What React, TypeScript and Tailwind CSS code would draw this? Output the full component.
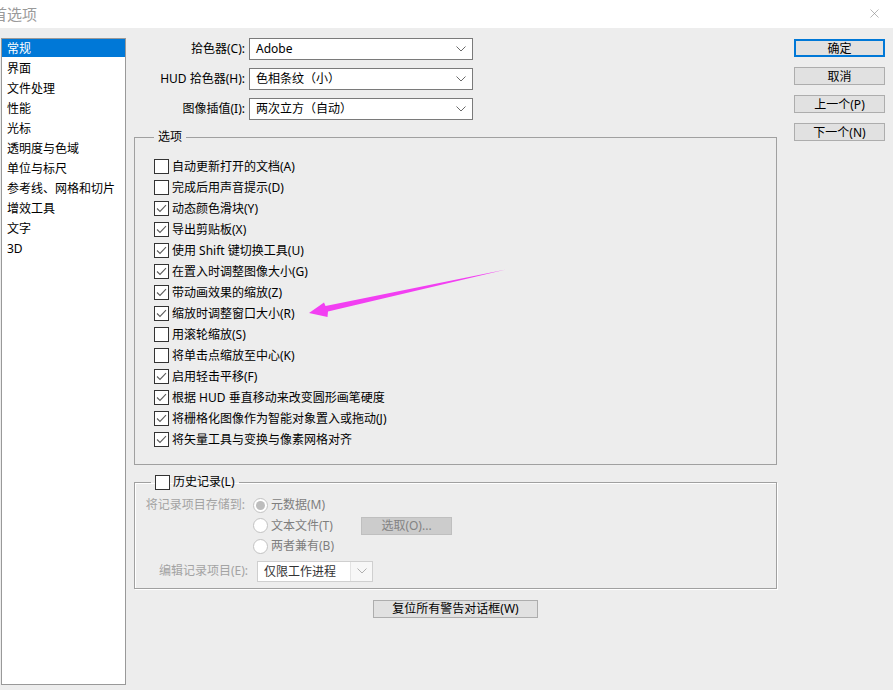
import { X } from 'lucide-react';

const font = "font-['Noto_Sans','Noto_Sans_CJK_SC',sans-serif]";

const navItems = ['常规', '界面', '文件处理', '性能', '光标', '透明度与色域', '单位与标尺', '参考线、网格和切片', '增效工具', '文字', '3D'];

const options: [string, boolean][] = [
  ['自动更新打开的文档(A)', false],
  ['完成后用声音提示(D)', false],
  ['动态颜色滑块(Y)', true],
  ['导出剪贴板(X)', true],
  ['使用 Shift 键切换工具(U)', true],
  ['在置入时调整图像大小(G)', true],
  ['带动画效果的缩放(Z)', true],
  ['缩放时调整窗口大小(R)', true],
  ['用滚轮缩放(S)', false],
  ['将单击点缩放至中心(K)', false],
  ['启用轻击平移(F)', true],
  ['根据 HUD 垂直移动来改变圆形画笔硬度', true],
  ['将栅格化图像作为智能对象置入或拖动(J)', true],
  ['将矢量工具与变换与像素网格对齐', true],
];

const Chevron = ({ color = '#6b6b6b' }: { color?: string }) => (
  <svg width="10" height="6" viewBox="0 0 10 6">
    <path d="M0.5 0.5 L5 5 L9.5 0.5" fill="none" stroke={color} strokeWidth="1" />
  </svg>
);

const CheckBox = ({ checked }: { checked?: boolean }) => (
  <span className="w-[15px] h-[15px] border border-[#333] bg-white flex items-center justify-center shrink-0">
    {checked && (
      <svg width="11" height="9" viewBox="0 0 11 9">
        <path d="M1 4.5 L4 7.5 L10 1.2" fill="none" stroke="#5c5c5c" strokeWidth="1.1" />
      </svg>
    )}
  </span>
);

const Radio = ({ selected }: { selected?: boolean }) => (
  <span className="w-[15px] h-[15px] rounded-full border border-[#c2c2c2] bg-white flex items-center justify-center shrink-0">
    {selected && <span className="w-[9px] h-[9px] rounded-full bg-[#bdbdbd]" />}
  </span>
);

function Select({ label, value }: { label: string; value: string }) {
  return (
    <div className="flex items-center h-[22px]">
      <span className="w-[111px] text-right text-black">{label}</span>
      <div className="ml-[4px] w-[224px] h-[22px] border border-[#7a7a7a] bg-white flex items-center justify-between pl-[6px] pr-[6px]">
        <span className="text-black">{value}</span>
        <Chevron />
      </div>
    </div>
  );
}

export default function App() {
  return (
    <div className={`${font} relative w-[893px] h-[690px] bg-[#ededed] overflow-hidden text-[12px] leading-[16px]`}>
      {/* title bar */}
      <div className="h-[28px] bg-white flex items-center justify-between">
        <span className="-ml-[8px] text-[15px] text-[#9a9a9a]">首选项</span>
        <X className="w-[15px] h-[15px] mr-[11px] -mt-[2px] text-[#8a8a8a]" strokeWidth={1} />
      </div>

      <div className="flex items-start">
        {/* category list */}
        <div className="ml-[1px] mt-[10px] w-[125px] h-[647px] border border-[#999] bg-white">
          {navItems.map((item, i) => (
            <div
              key={item}
              className={`h-[18px] leading-[19px] mb-[2px] pl-[5px] ${i === 0 ? 'bg-[#0078d7] text-white' : 'text-black'}`}
            >
              {item}
            </div>
          ))}
        </div>

        {/* main */}
        <div className="ml-[8px] mt-[10px] w-[643px]">
          <div className="flex flex-col gap-[8px]">
            <Select label="拾色器(C):" value="Adobe" />
            <Select label="HUD 拾色器(H):" value="色相条纹（小）" />
            <Select label="图像插值(I):" value="两次立方（自动）" />
          </div>

          <fieldset className="mt-[9px] border border-[#a0a0a0] pl-[19px] pt-[11px] pb-[14px]">
            <legend className="ml-[0px] px-[4px] leading-[16px] text-black">选项</legend>
            {options.map(([text, checked]) => (
              <div key={text} className="h-[21px] flex items-center gap-[3px] text-black">
                <CheckBox checked={checked} />
                <span>{text}</span>
              </div>
            ))}
          </fieldset>

          <fieldset className="mt-[9px] border border-[#a0a0a0] shadow-[1px_1px_0_#fff,inset_1px_1px_0_#fff] pb-[6px] pt-[5px]">
            <legend className="ml-[16px] px-[4px] flex items-center gap-[3px] text-black">
              <CheckBox />
              <span>历史记录(L)</span>
            </legend>
            <div className="flex">
              <span className="w-[110px] text-right text-[#a3a3a3] h-[20px] leading-[20px]">将记录项目存储到:</span>
              <div className="ml-[8px] flex flex-col">
                <div className="h-[20.5px] flex items-center gap-[3px] text-[#7e7e7e]">
                  <Radio selected />
                  <span>元数据(M)</span>
                </div>
                <div className="h-[20.5px] flex items-center gap-[3px] text-[#7e7e7e]">
                  <Radio />
                  <span className="w-[87px]">文本文件(T)</span>
                  <span className="w-[91px] h-[18px] bg-[#cccccc] border border-[#bfbfbf] text-[#838383] flex items-center justify-center">
                    选取(O)...
                  </span>
                </div>
                <div className="h-[20.5px] flex items-center gap-[3px] text-[#7e7e7e]">
                  <Radio />
                  <span>两者兼有(B)</span>
                </div>
              </div>
            </div>
            <div className="mt-[4px] flex items-center">
              <span className="w-[113px] text-right text-[#a3a3a3]">编辑记录项目(E):</span>
              <div className="ml-[9px] w-[116px] h-[21px] border border-[#cfcfcf] bg-[#f7f7f7] flex items-center">
                <span className="h-[19px] w-[93px] bg-white border-r border-[#e3e3e3] pl-[6px] leading-[19px] text-[#333]">
                  仅限工作进程
                </span>
                <span className="flex-1 flex justify-center">
                  <Chevron color="#b0b0b0" />
                </span>
              </div>
            </div>
          </fieldset>

          <div className="mt-[11px] flex justify-center">
            <span className="w-[165px] h-[18px] bg-[#e1e1e1] border border-[#adadad] flex items-center justify-center text-black">
              复位所有警告对话框(W)
            </span>
          </div>
        </div>

        {/* buttons */}
        <div className="ml-auto mr-[8px] mt-[11px] w-[91px] flex flex-col gap-[10px]">
          <button className="h-[18px] border-2 border-[#0078d7] bg-[#e1e1e1] text-black leading-[15px]">确定</button>
          <button className="h-[18px] border border-[#adadad] bg-[#e1e1e1] text-black leading-[17px]">取消</button>
          <button className="h-[18px] border border-[#adadad] bg-[#e1e1e1] text-black leading-[17px]">上一个(P)</button>
          <button className="h-[18px] border border-[#adadad] bg-[#e1e1e1] text-black leading-[17px]">下一个(N)</button>
        </div>
      </div>

      {/* annotation arrow */}
      <svg className="absolute left-0 top-0 pointer-events-none" width="893" height="690">
        <polygon points="309,313 324,302.5 325.5,306 506,269.5 328,311.5 327.5,317" fill="#f23ff2" />
      </svg>
    </div>
  );
}
